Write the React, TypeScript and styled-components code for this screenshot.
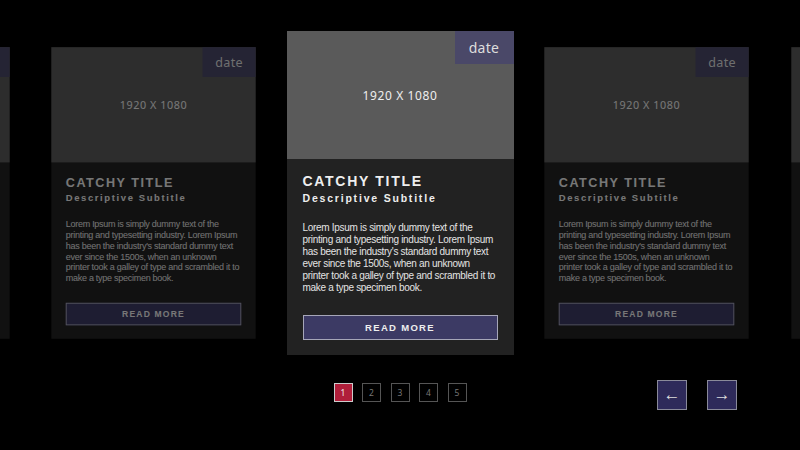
import React from "react";
import styled, { createGlobalStyle } from "styled-components";

const GlobalStyle = createGlobalStyle`
  html, body {
    margin: 0;
    padding: 0;
    background: #000;
  }
  body {
    font-family: "Liberation Sans", Arial, sans-serif;
    color: #fff;
  }
`;

const Page = styled.div`
  width: 800px;
  height: 450px;
  overflow: hidden;
  background: #000;
  display: flex;
  flex-direction: column;
`;

const Track = styled.div`
  margin-top: 31px;
  height: 324px;
  display: flex;
  justify-content: center;
  align-items: center;
  gap: 19.5px;
`;

const Card = styled.div<{ $active?: boolean }>`
  flex: 0 0 227px;
  width: 227px;
  height: 324px;
  display: flex;
  flex-direction: column;
  background: #222;
  transform: ${(p) => (p.$active ? "none" : "scale(0.9)")};
  opacity: ${(p) => (p.$active ? 1 : 0.5)};
`;

const Picture = styled.div`
  position: relative;
  height: 128px;
  background: #5a5a5a;
  display: flex;
  align-items: center;
  justify-content: center;
  font-family: "Noto Sans", sans-serif;
  font-size: 12px;
  letter-spacing: 0.6px;
  color: #eee;
`;

const DateBadge = styled.span`
  position: absolute;
  top: 0;
  right: 0;
  width: 59px;
  height: 33px;
  display: flex;
  align-items: center;
  justify-content: center;
  background: #4a4868;
  font-family: "Noto Sans", sans-serif;
  font-size: 14px;
  letter-spacing: 0.3px;
  color: #ddd;
`;

const Body = styled.div`
  flex: 1;
  padding: 13px 16px 15px;
  display: flex;
  flex-direction: column;
`;

const Title = styled.h2`
  margin: 0;
  font-size: 14px;
  line-height: 19px;
  font-weight: 700;
  letter-spacing: 1.7px;
  color: #eee;
`;

const Subtitle = styled.h3`
  margin: 0;
  font-size: 10.5px;
  line-height: 14px;
  font-weight: 700;
  letter-spacing: 1.8px;
  color: #eee;
`;

const Text = styled.p`
  margin: 17px 0 0;
  font-size: 10px;
  line-height: 12px;
  letter-spacing: -0.3px;
  color: #e4e4e4;
`;

const ReadMore = styled.button`
  margin-top: auto;
  height: 25px;
  width: 100%;
  background: #3c3a64;
  border: 1px solid #a6a6b8;
  color: #eee;
  font-family: "Liberation Sans", Arial, sans-serif;
  font-size: 9.5px;
  font-weight: 700;
  letter-spacing: 1.3px;
  cursor: pointer;
`;

const Controls = styled.div`
  margin-top: 25px;
  height: 30px;
  display: grid;
  grid-template-columns: 1fr auto 1fr;
  align-items: center;
`;

const Pages = styled.div`
  grid-column: 2;
  display: flex;
  gap: 9.5px;
  margin-top: -5px;
`;

const PageBox = styled.button<{ $active?: boolean }>`
  width: 19px;
  height: 19px;
  padding: 0;
  display: flex;
  align-items: center;
  justify-content: center;
  background: ${(p) => (p.$active ? "#b01e3a" : "transparent")};
  border: 1px solid ${(p) => (p.$active ? "#ccc" : "#555")};
  color: ${(p) => (p.$active ? "#eee" : "#777")};
  font-family: "Noto Sans", sans-serif;
  font-size: 8.5px;
`;

const Arrows = styled.div`
  grid-column: 3;
  justify-self: end;
  display: flex;
  gap: 20px;
  margin-right: 63px;
`;

const ArrowBtn = styled.button`
  width: 30px;
  height: 30px;
  padding: 0;
  display: flex;
  align-items: center;
  justify-content: center;
  background: #2e2a5a;
  border: 1px solid #8a8a9a;
  color: #ddd;
  font-size: 17px;
  font-family: "Liberation Sans", Arial, sans-serif;
`;

const lorem =
  "Lorem Ipsum is simply dummy text of the printing and typesetting industry. Lorem Ipsum has been the industry's standard dummy text ever since the 1500s, when an unknown printer took a galley of type and scrambled it to make a type specimen book.";

const slides = [0, 1, 2, 3, 4];

function App() {
  const active = 2;

  return (
    <Page>
      <GlobalStyle />
      <Track>
        {slides.map((i) => (
          <Card key={i} $active={i === active}>
            <Picture>
              1920 X 1080
              <DateBadge>date</DateBadge>
            </Picture>
            <Body>
              <Title>CATCHY TITLE</Title>
              <Subtitle>Descriptive Subtitle</Subtitle>
              <Text>{lorem}</Text>
              <ReadMore>READ MORE</ReadMore>
            </Body>
          </Card>
        ))}
      </Track>
      <Controls>
        <Pages>
          {[1, 2, 3, 4, 5].map((n) => (
            <PageBox key={n} $active={n === 1}>
              {n}
            </PageBox>
          ))}
        </Pages>
        <Arrows>
          <ArrowBtn>←</ArrowBtn>
          <ArrowBtn>→</ArrowBtn>
        </Arrows>
      </Controls>
    </Page>
  );
}

export default App;
